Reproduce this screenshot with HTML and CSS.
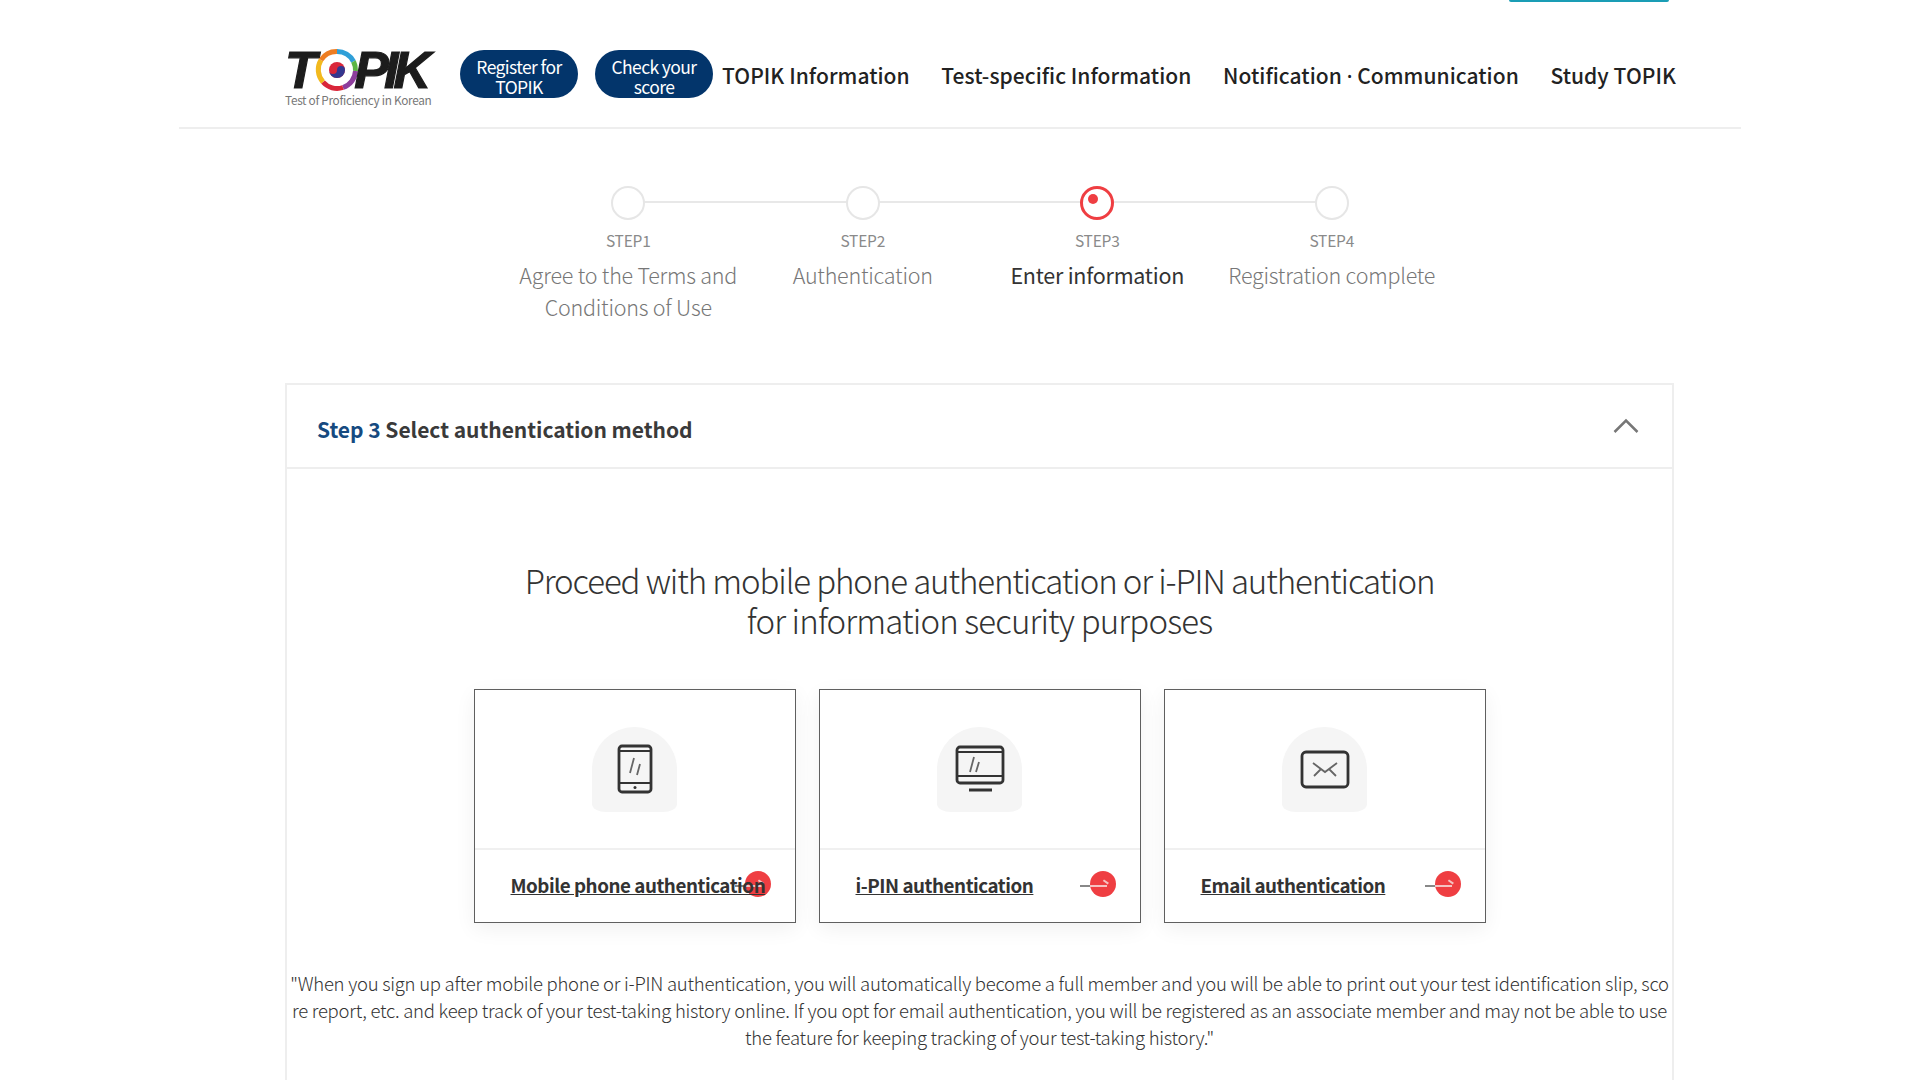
FILE: index.html
```html
<!DOCTYPE html>
<html lang="en">
<head>
<meta charset="utf-8">
<title>TOPIK</title>
<link rel="stylesheet" href="styles.css">
</head>
<body>
<div class="top-strip"><span class="top-tab"></span></div>
<header class="header">
  <div class="logo">
    <div class="logo-word"><span>T</span><svg class="logo-o" viewBox="0 0 44 44" width="44" height="44">
      <path d="M22 3.500A18.500 18.500 0 0 1 38.500 13.500" fill="none" stroke="#2f9fd8" stroke-width="5"/>
      <path d="M38.500 13.500A18.500 18.500 0 0 1 40.500 23" fill="none" stroke="#5bb544" stroke-width="5"/>
      <path d="M40.500 23A18.500 18.500 0 0 1 28 39.500" fill="none" stroke="#8d3d9c" stroke-width="5"/>
      <path d="M28 39.500A18.500 18.500 0 0 1 8 34" fill="none" stroke="#d9263a" stroke-width="5"/>
      <path d="M8 34A18.500 18.500 0 0 1 6 12" fill="none" stroke="#f2b91e" stroke-width="5"/>
      <path d="M6 12A18.500 18.500 0 0 1 22 3.500" fill="none" stroke="#ee7d22" stroke-width="5"/>
      <circle cx="22" cy="22" r="8" fill="#d9263a"/>
      <path d="M14 22a4 4 0 0 0 8 0a4 4 0 0 1 8 0a8 8 0 0 1-16 0z" fill="#33378f"/>
    </svg><span class="logo-rest">PIK</span></div>
    <div class="logo-sub">Test of Proficiency in Korean</div>
  </div>
  <div class="pills">
    <a class="pill">Register for TOPIK</a>
    <a class="pill">Check your score</a>
  </div>
  <nav class="nav">
    <a>TOPIK Information</a>
    <a>Test-specific Information</a>
    <a>Notification <span class="mid">·</span> Communication</a>
    <a>Study TOPIK</a>
  </nav>
</header>

<ol class="steps">
  <li class="step"><span class="dot"></span><span class="step-no">STEP1</span><span class="step-label">Agree to the Terms and Conditions of Use</span></li>
  <li class="step"><span class="dot"></span><span class="step-no">STEP2</span><span class="step-label">Authentication</span></li>
  <li class="step is-current"><span class="dot"></span><span class="step-no">STEP3</span><span class="step-label">Enter information</span></li>
  <li class="step"><span class="dot"></span><span class="step-no">STEP4</span><span class="step-label">Registration complete</span></li>
</ol>

<section class="panel">
  <div class="panel-head">
    <h2 class="panel-title"><em>Step 3</em> Select authentication method</h2>
    <svg class="chevron" viewBox="0 0 26 16" width="26" height="16"><path d="M1.500 14L13 2.500L24.500 14" fill="none" stroke="#777" stroke-width="2.500"/></svg>
  </div>
  <div class="panel-body">
    <h3 class="lead"><span class="lead-a">Proceed with mobile phone authentication or i-PIN authentication</span><br><span class="lead-b">for information security purposes</span></h3>
    <div class="cards">
      <a class="card">
        <div class="card-top"><span class="icon-bg">
          <svg class="icon" viewBox="0 0 44 56" width="44" height="56" fill="none" stroke="#333">
            <rect x="6" y="6" width="32" height="46" rx="3" stroke-width="2.800"/>
            <path d="M7 11h30M7 43h30" stroke-width="1.800"/>
            <path d="M21 18l-4 15M27 24l-3 11" stroke-width="1.800" stroke="#666"/>
            <circle cx="22" cy="47.500" r="1.500" fill="#333" stroke="none"/>
          </svg></span></div>
        <div class="card-foot"><span class="card-link">Mobile phone authentication</span><span class="arrow"></span></div>
      </a>
      <a class="card">
        <div class="card-top"><span class="icon-bg">
          <svg class="icon" viewBox="0 0 56 56" width="56" height="56" fill="none" stroke="#333">
            <rect x="5" y="7" width="46" height="36" rx="3" stroke-width="2.800"/>
            <path d="M6 12h44M6 36h44" stroke-width="1.800"/>
            <path d="M22 17l-4 15M27 22l-3 10" stroke-width="1.800" stroke="#666"/>
            <path d="M17 50h23" stroke-width="3"/>
          </svg></span></div>
        <div class="card-foot"><span class="card-link">i-PIN authentication</span><span class="arrow"></span></div>
      </a>
      <a class="card">
        <div class="card-top"><span class="icon-bg">
          <svg class="icon" viewBox="0 0 56 56" width="56" height="56" fill="none" stroke="#333">
            <rect x="5" y="12" width="46" height="35" rx="4" stroke-width="2.800"/>
            <path d="M16 23l12 9l12-9M17 36l7-7M39 36l-7-7" stroke-width="1.800" stroke="#666"/>
          </svg></span></div>
        <div class="card-foot"><span class="card-link">Email authentication</span><span class="arrow"></span></div>
      </a>
    </div>
    <p class="note">"When you sign up after mobile phone or i-PIN authentication, you will automatically become a full member and you will be able to print out your test identification slip, score report, etc. and keep track of your test-taking history online. If you opt for email authentication, you will be registered as an associate member and may not be able to use the feature for keeping tracking of your test-taking history."</p>
  </div>
</section>
</body>
</html>
```
FILE: styles.css
```css
* { box-sizing: border-box; }
html, body { height: 1080px; overflow: hidden; }
body {
  margin: 0;
  background: #fff;
  color: #333;
  font-family: "Noto Sans CJK KR", "Noto Sans", sans-serif;
}
a { color: inherit; text-decoration: none; }

.top-strip { height: 2px; width: 1562px; margin: 0 auto; display: flex; justify-content: flex-end; padding-right: 72px; }
.top-tab { width: 160px; height: 2px; background: #1a9db5; border-radius: 0 0 3px 3px; }

.header {
  width: 1562px;
  height: 127px;
  margin: 0 auto;
  padding: 46px 65px 0 106px;
  display: flex;
  align-items: flex-start;
  border-bottom: 2px solid #eee;
}
.logo { width: 150px; flex: none; }
.logo-word {
  display: flex;
  align-items: center;
  height: 44px;
  font-family: "Liberation Sans", sans-serif;
  font-weight: 700;
  font-style: italic;
  font-size: 52px;
  line-height: 44px;
  color: #1c1c1c;
  letter-spacing: -2.500px;
  -webkit-text-stroke: 1.200px #1c1c1c;
}
.logo-rest { letter-spacing: -5px; }
.logo-o { flex: none; margin: 0 -5px 0 1px; }
.logo-sub { margin-top: 1px; font-size: 11.800px; line-height: 14px; color: #777; white-space: nowrap; letter-spacing: -0.3px; }

.pills { display: flex; gap: 17px; margin: 2px 0 0 25px; flex: none; }
.pill {
  width: 118px;
  height: 48px;
  border-radius: 24px;
  background: #03356b;
  color: #fff;
  font-size: 17.500px;
  line-height: 20px;
  letter-spacing: -0.6px;
  text-align: center;
  display: flex;
  align-items: center;
  justify-content: center;
  padding: 5px 10px 0;
}
.nav {
  flex: 1;
  display: flex;
  justify-content: space-between;
  margin: 12px 0 0 9px;
  font-size: 21px;
  line-height: 30px;
  font-weight: 500;
  color: #222;
  letter-spacing: 0.05px;
  white-space: nowrap;
}
.mid { font-family: "Noto Sans", sans-serif; }

.steps {
  list-style: none;
  margin: 57px 0 0 511px;
  padding: 0;
  display: flex;
  width: 938px;
}
.step {
  position: relative;
  width: 234.500px;
  padding: 0 8px;
  display: flex;
  flex-direction: column;
  align-items: center;
  text-align: center;
}
.step::before {
  content: "";
  position: absolute;
  top: 15px;
  left: 50%;
  width: 100%;
  height: 2px;
  background: #e8e8e8;
}
.step:last-child::before { display: none; }
.dot {
  position: relative;
  width: 34px;
  height: 34px;
  border: 2px solid #e6e6e6;
  border-radius: 50%;
  background: #fff;
}
.is-current .dot { border: 3px solid #ef3e42; }
.is-current .dot::after {
  content: "";
  position: absolute;
  left: 5px;
  top: 5px;
  width: 10px;
  height: 10px;
  border-radius: 50%;
  background: #ef3e42;
}
.step-no { margin-top: 9px; font-size: 15.500px; line-height: 22px; color: #8a8a8a; letter-spacing: -0.2px; }
.step-label { margin-top: 8px; font-size: 21.500px; line-height: 32px; color: #777; font-weight: 300; letter-spacing: -0.23px; }
.is-current .step-label { color: #333; font-weight: 400; }

.panel {
  width: 1389px;
  height: 697px;
  margin: 60px 0 0 285px;
  border: 2px solid #eee;
  border-bottom: 0;
}
.panel-head {
  height: 84px;
  padding: 6px 33px 0 30px;
  display: flex;
  align-items: center;
  justify-content: space-between;
  border-bottom: 2px solid #eee;
}
.panel-title { margin: 0; font-size: 21px; line-height: 32px; font-weight: 700; color: #3a3a3a; letter-spacing: -0.03px; }
.panel-title em { font-style: normal; color: #164a80; }
.chevron { margin: 0 0 6px; }
.panel-body { padding: 91px 2px 0; }
.lead {
  margin: 0;
  text-align: center;
  font-size: 33px;
  line-height: 40px;
  font-weight: 300;
  color: #333;
}
.lead-a { letter-spacing: -1.100px; }
.lead-b { letter-spacing: -0.850px; }
.cards { display: flex; justify-content: center; gap: 23px; margin-top: 49px; }
.card {
  width: 322px;
  height: 234px;
  border: 1px solid #5f5f5f;
  background: #fff;
  box-shadow: 0 6px 20px rgba(0,0,0,.06);
  display: flex;
  flex-direction: column;
}
.card-top { height: 160px; padding-top: 37px; display: flex; justify-content: center; border-bottom: 2px solid #f0f0f0; }
.icon-bg {
  width: 85px;
  height: 85px;
  border-radius: 50% 50% 14px 14px / 50% 50% 8px 8px;
  background: #f5f5f5;
  display: flex;
  align-items: center;
  justify-content: center;
}
.icon { margin-top: -3px; }
.card-foot { position: relative; flex: 1; display: flex; align-items: center; padding: 0 0 2px 36px; }
.card-link {
  position: relative;
  z-index: 1;
  font-size: 18.800px;
  line-height: 28px;
  font-weight: 700;
  color: #333;
  letter-spacing: -0.46px;
  text-decoration: underline;
  white-space: nowrap;
}
.arrow {
  position: absolute;
  right: 24px;
  top: 21px;
  width: 26px;
  height: 26px;
  border-radius: 50%;
  background: #ef3e42;
}
.arrow::before {
  content: "";
  position: absolute;
  left: -10px;
  top: 14px;
  width: 27px;
  height: 1.500px;
  background: linear-gradient(90deg, #888 0 10px, #f5c2c2 10px);
}
.arrow::after {
  content: "";
  position: absolute;
  left: 13px;
  top: 10px;
  width: 6px;
  height: 1.500px;
  background: #f5c2c2;
  transform: rotate(35deg);
}
.note {
  margin: 47px 0 0;
  font-size: 18.500px;
  line-height: 27px;
  font-weight: 300;
  color: #333;
  text-align: center;
  word-break: break-all;
  letter-spacing: -0.25px;
}
```
